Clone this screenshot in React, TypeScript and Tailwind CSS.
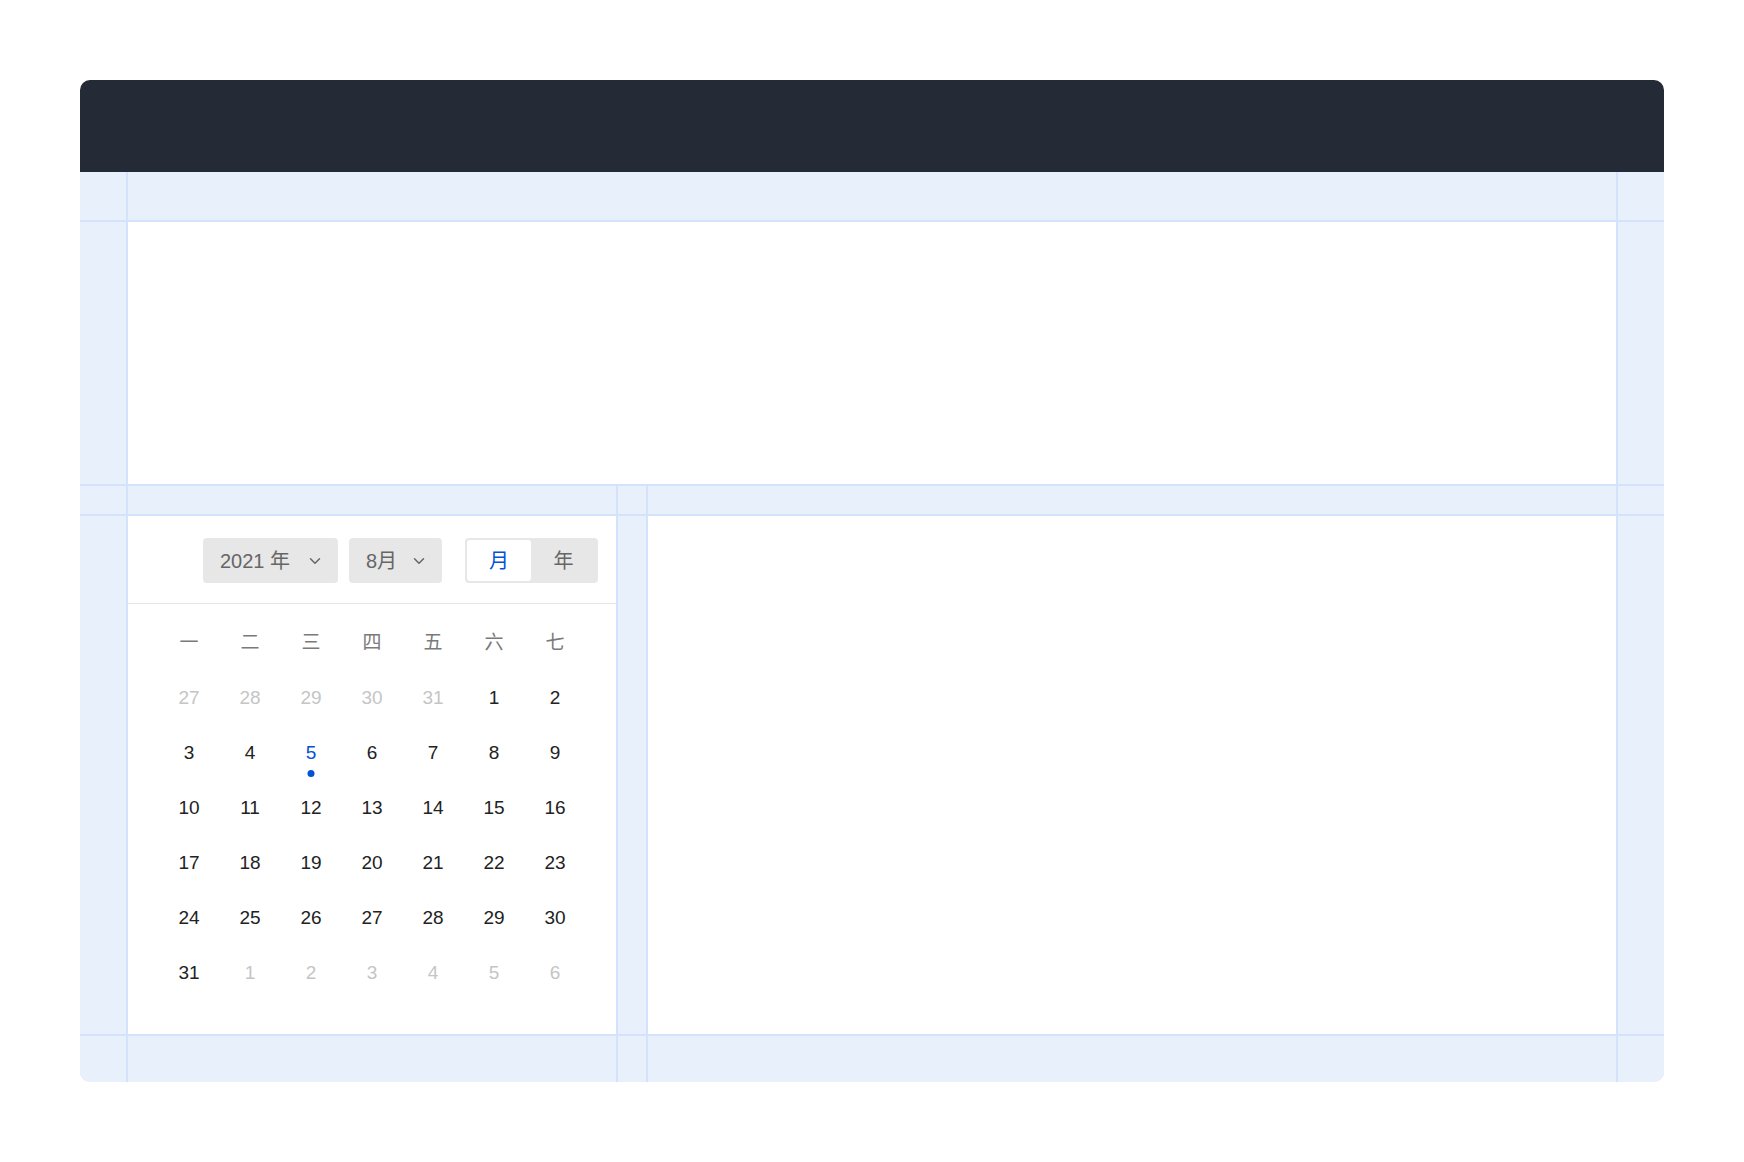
import { ChevronDown } from 'lucide-react';

// Colours of the layout-grid overlay
const BAND = 'bg-[#e8f0fc]';

type Day = { n: number; muted?: boolean; today?: boolean };

const WEEKDAYS = ['一', '二', '三', '四', '五', '六', '七'];

function buildDays(): Day[] {
  const days: Day[] = [];
  for (const n of [27, 28, 29, 30, 31]) days.push({ n, muted: true });
  for (let n = 1; n <= 31; n++) days.push({ n, today: n === 5 });
  for (let n = 1; n <= 6; n++) days.push({ n, muted: true });
  return days;
}

function Select({ label, width }: { label: string; width: string }) {
  return (
    <div
      className={`${width} h-[45px] rounded-[4px] bg-[#e7e7e7] flex items-center justify-between pl-[17px] pr-[14px]
        text-[20px] text-[#666666]`}
    >
      <span>{label}</span>
      <ChevronDown size={18} strokeWidth={2} className="text-[#666666]" />
    </div>
  );
}

function Calendar() {
  const days = buildDays();

  return (
    <div className="bg-white flex flex-col">
      {/* Controls */}
      <div className="flex items-center justify-end pt-[22px] pb-[20px] pr-[18px]">
        <Select label="2021 年" width="w-[135px]" />
        <div className="ml-[11px]">
          <Select label="8月" width="w-[93px]" />
        </div>
        <div className="ml-[23px] w-[133px] h-[45px] rounded-[4px] bg-[#e7e7e7] p-[2px] flex">
          <div className="w-[64px] h-full rounded-[3px] bg-white flex items-center justify-center text-[20px] text-[#0052d9]">
            月
          </div>
          <div className="flex-1 flex items-center justify-center text-[20px] text-[#666666]">年</div>
        </div>
      </div>
      <div className="h-px bg-[#e7e7e7]" />

      {/* Month grid */}
      <div className="pt-[11px] grid grid-cols-[repeat(7,61px)] justify-center">
        {WEEKDAYS.map(w => (
          <div key={w} className="h-[55px] leading-[55px] text-center text-[19px] text-[#7a7a7a]">
            {w}
          </div>
        ))}
        {days.map((d, i) => (
          <div
            key={i}
            className={`relative h-[55px] leading-[55px] text-center text-[19px]
              ${d.muted ? 'text-[#c5c5c5]' : d.today ? 'text-[#0052d9]' : 'text-[#222222]'}`}
          >
            {d.n}
            {d.today && (
              <span className="absolute left-1/2 top-[45px] -translate-x-1/2 w-[7px] h-[7px] rounded-full bg-[#0052d9]" />
            )}
          </div>
        ))}
      </div>
    </div>
  );
}

export default function App() {
  return (
    <div
      className="min-h-screen bg-white px-[80px] pt-[80px]"
      style={{ fontFamily: '"Liberation Sans", "Noto Sans CJK SC", sans-serif' }}
    >
      <div className="w-[1584px] rounded-[10px] overflow-hidden">
        {/* Top bar */}
        <div className="h-[92px] bg-[#242a36]" />

        {/* Layout grid */}
        <div
          className="grid grid-cols-[46px_488px_28px_968px_46px] grid-rows-[48px_262px_28px_518px_46px]
            gap-[2px] bg-[#d4e3fb]"
        >
          {/* row 1 */}
          <div className={BAND} />
          <div className={`${BAND} col-span-3`} />
          <div className={BAND} />

          {/* row 2 */}
          <div className={BAND} />
          <div className="bg-white col-span-3" />
          <div className={BAND} />

          {/* row 3 */}
          <div className={BAND} />
          <div className={BAND} />
          <div className={BAND} />
          <div className={BAND} />
          <div className={BAND} />

          {/* row 4 */}
          <div className={BAND} />
          <Calendar />
          <div className={BAND} />
          <div className="bg-white" />
          <div className={BAND} />

          {/* row 5 */}
          <div className={BAND} />
          <div className={BAND} />
          <div className={BAND} />
          <div className={BAND} />
          <div className={BAND} />
        </div>
      </div>
    </div>
  );
}
